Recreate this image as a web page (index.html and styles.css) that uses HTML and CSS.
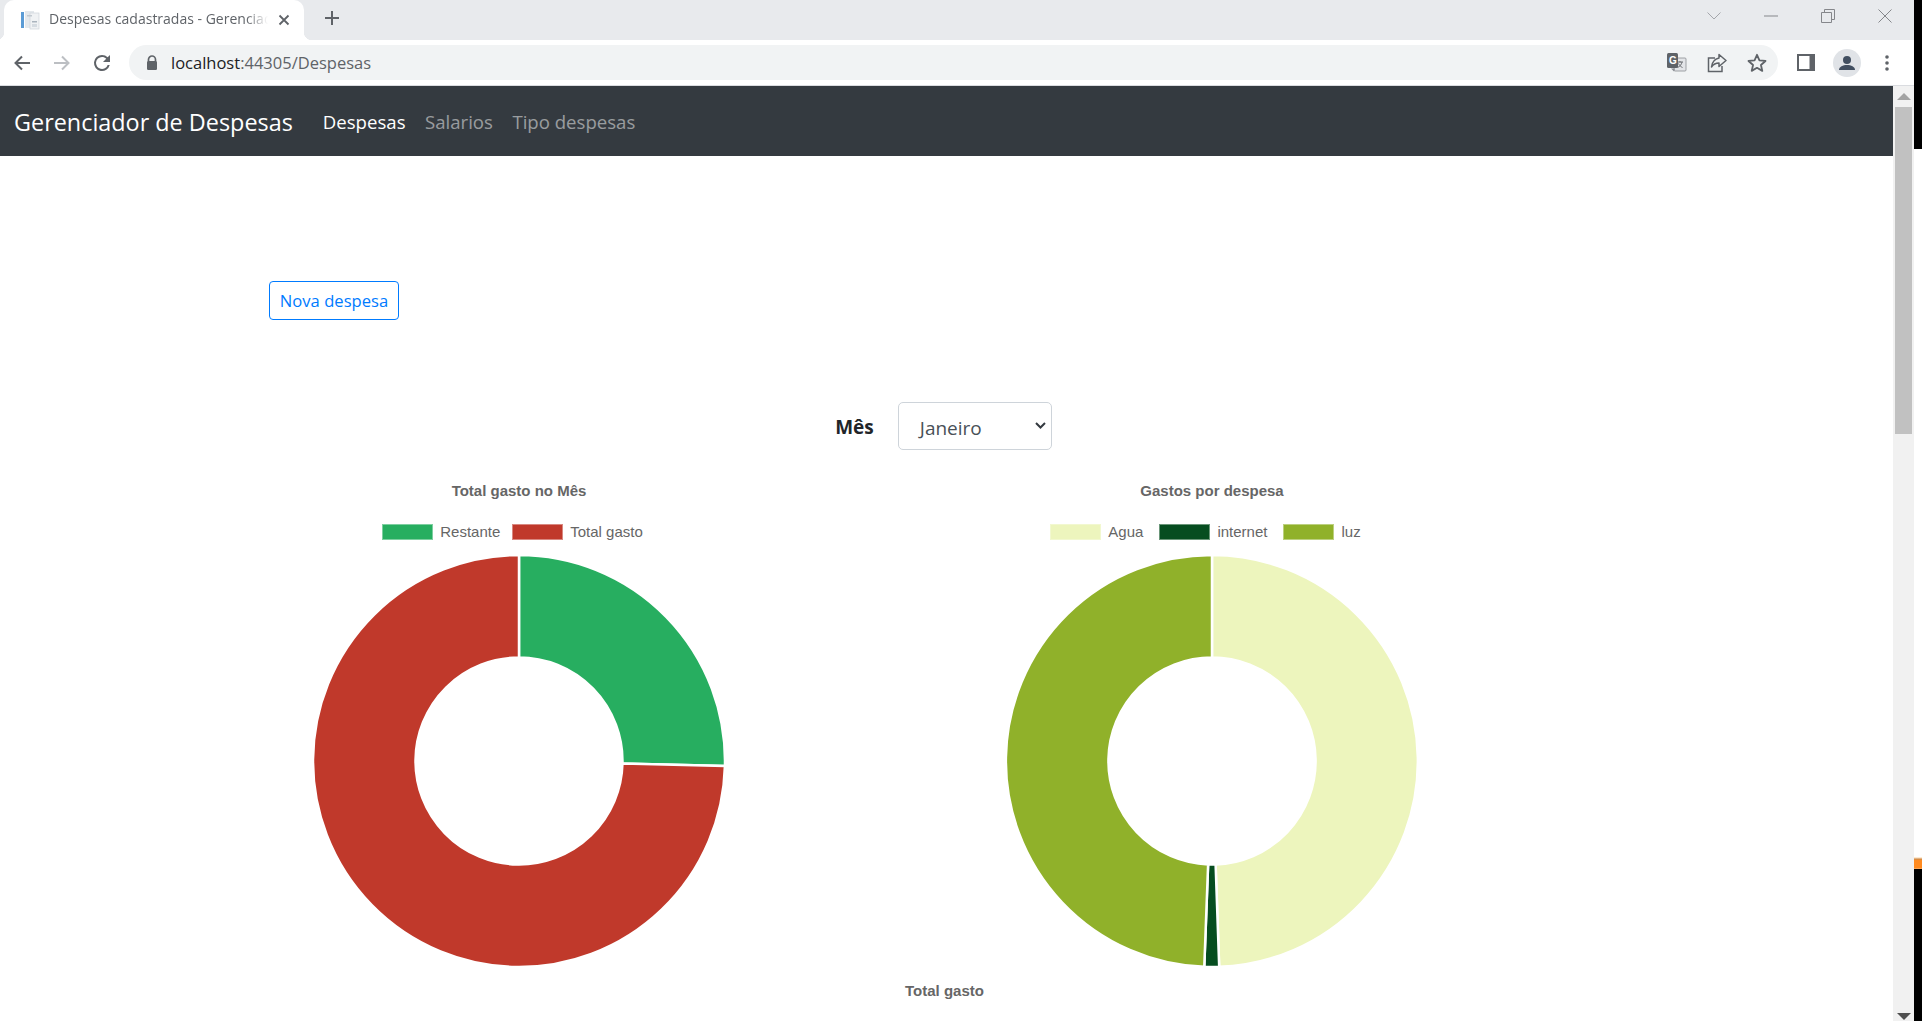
FILE: index.html
```html
<!DOCTYPE html>
<html lang="pt-BR">
<head>
<meta charset="utf-8">
<title>Despesas cadastradas - Gerenciador de Despesas</title>
<link rel="stylesheet" href="styles.css">
</head>
<body>
<div class="screen">
  <div class="window">
    <div class="tabstrip">
      <div class="tab">
        <svg class="favicon" width="20" height="20" viewBox="0 0 20 20"><rect x="1" y="2" width="3" height="16" fill="#5b9bd5"/><rect x="5" y="1" width="9" height="17" fill="#e4e8ec"/><rect x="10" y="3" width="9" height="16" fill="#f0f2f4" stroke="#cfd4da" stroke-width=".7"/><rect x="12" y="11" width="5" height="1.5" fill="#aab4be"/><rect x="12" y="14" width="5" height="3" fill="#d5dbe1"/><rect x="7" y="5" width="5" height="1.5" fill="#c2c9d0"/></svg>
        <span class="tab-title">Despesas cadastradas - Gerenciador de Despesas</span>
        <svg class="tab-close" width="12" height="12" viewBox="0 0 12 12"><path d="M1.5 1.5l9 9M10.500 1.500l-9 9" stroke="#5f6368" stroke-width="1.800" fill="none"/></svg>
      </div>
      <svg class="new-tab" width="16" height="16" viewBox="0 0 16 16"><path d="M8 1v14M1 8h14" stroke="#5f6368" stroke-width="2" fill="none"/></svg>
      <div class="win-controls">
        <span class="win-btn"><svg width="14" height="8" viewBox="0 0 14 8"><path d="M.5.5L7 7l6.500-6.500" stroke="#a4a6ab" fill="none"/></svg></span>
        <span class="win-btn"><svg width="14" height="2" viewBox="0 0 14 2"><path d="M0 1h14" stroke="#85878b" fill="none"/></svg></span>
        <span class="win-btn"><svg width="14" height="14" viewBox="0 0 14 14"><path d="M.5 3.500h10v10H.5zM3.500 3.500V.5h10v10h-3" stroke="#85878b" fill="none"/></svg></span>
        <span class="win-btn"><svg width="14" height="14" viewBox="0 0 14 14"><path d="M.5.5l13 13M13.500.5l-13 13" stroke="#85878b" fill="none"/></svg></span>
      </div>
    </div>

    <div class="toolbar">
      <span class="tool-btn"><svg width="18" height="18" viewBox="0 0 18 18"><path d="M17 9H3M9 2.500L2.500 9 9 15.500" stroke="#5f6368" stroke-width="2" fill="none"/></svg></span>
      <span class="tool-btn"><svg width="18" height="18" viewBox="0 0 18 18"><path d="M1 9h14M9 2.500L15.500 9 9 15.500" stroke="#bcbfc3" stroke-width="2" fill="none"/></svg></span>
      <span class="tool-btn"><svg width="24" height="24" viewBox="0 0 24 24"><path d="M17.650 6.350A7.960 7.960 0 0 0 12 4a8 8 0 1 0 7.730 10h-2.080A6 6 0 1 1 12 6c1.660 0 3.140.69 4.220 1.780L13 11h7V4z" fill="#5f6368"/></svg></span>
      <div class="omnibox">
        <svg class="lock" width="14" height="16" viewBox="0 0 14 16"><path d="M3.500 6V4.500a3.500 3.500 0 0 1 7 0V6" stroke="#5f6368" stroke-width="1.700" fill="none"/><rect x="2" y="6" width="10" height="9" rx="1.200" fill="#5f6368"/></svg>
        <span class="url"><span class="url-host">localhost</span>:44305/Despesas</span>
        <span class="omni-btn"><svg width="20" height="20" viewBox="0 0 20 20"><rect x="7" y="5" width="12" height="13" rx="1" fill="#e3e5e8" stroke="#8b8e93" stroke-width=".8"/><path d="M10 9h6M13 8v1.500M15 9c-.5 2.500-2 4.500-4.500 5.500M11.500 10.500c.8 1.700 2.200 3.200 4 4" stroke="#6b6e73" stroke-width="1" fill="none"/><rect x="0" y="0" width="11" height="15" rx="1.500" fill="#5f6368"/><path d="M4 15.500h4l-1 3z" fill="#8b8e93"/><text x="2" y="11" class="translate-g">G</text></svg></span>
        <span class="omni-btn"><svg width="20" height="20" viewBox="0 0 20 20"><path d="M8 5H1.500v13.500h13.500V13" stroke="#5f6368" stroke-width="1.500" fill="none"/><path d="M12 1.500L19 7.500l-7 6v-3.500c-3.500 0-5.500 1-7.500 4 .5-4.500 3-8 7.500-9z" stroke="#5f6368" stroke-width="1.500" fill="#f1f3f4" stroke-linejoin="round"/></svg></span>
        <span class="omni-btn"><svg width="20" height="20" viewBox="0 0 20 20"><path d="M10 1.800l2.450 5.550 6.050.6-4.550 4 1.350 5.950L10 14.800l-5.300 3.100 1.350-5.950-4.550-4 6.050-.6z" stroke="#5f6368" stroke-width="1.800" fill="none" stroke-linejoin="round"/></svg></span>
      </div>
      <span class="tool-right tool-panel"><svg width="18" height="17" viewBox="0 0 18 17"><rect width="18" height="17" fill="#5f6368"/><rect x="2" y="2" width="10.500" height="13" fill="#fff"/></svg></span>
      <span class="tool-right tool-avatar"><svg width="28" height="28" viewBox="0 0 28 28"><circle cx="14" cy="14" r="14" fill="#e0e3e7"/><circle cx="14" cy="11" r="4" fill="#414e60"/><path d="M6 21c0-3.500 4-5 8-5s8 1.500 8 5z" fill="#414e60"/></svg></span>
      <span class="tool-right tool-menu"><svg width="4" height="16" viewBox="0 0 4 16"><circle cx="2" cy="2" r="1.800" fill="#5f6368"/><circle cx="2" cy="8" r="1.800" fill="#5f6368"/><circle cx="2" cy="14" r="1.800" fill="#5f6368"/></svg></span>
    </div>

    <div class="viewport">
      <div class="page">
        <nav class="navbar">
          <a class="brand">Gerenciador de Despesas</a>
          <a class="nav-link active">Despesas</a>
          <a class="nav-link">Salarios</a>
          <a class="nav-link">Tipo despesas</a>
        </nav>
        <div class="actions"><a class="btn-outline">Nova despesa</a></div>
        <div class="month-filter">
          <label class="month-label">Mês</label>
          <div class="month-select"><span class="month-value">Janeiro</span><svg width="11" height="7" viewBox="0 0 11 7"><path d="M1 1l4.500 4.500L10 1" stroke="#343a40" stroke-width="2" fill="none"/></svg></div>
        </div>
        <div class="charts">
          <section class="chart">
            <h2 class="chart-title">Total gasto no Mês</h2>
            <ul class="legend">
              <li class="legend-item"><i class="swatch swatch-green"></i>Restante</li>
              <li class="legend-item"><i class="swatch swatch-red"></i>Total gasto</li>
            </ul>
            <svg class="donut" width="420" height="420" viewBox="0 0 420 420">
              <path class="slice" fill="#27ae60" d="M210 4A206 206 0 0 1 415.940 215.030L313.470 212.530A103.500 103.500 0 0 0 210 106.500Z"/>
              <path class="slice" fill="#c0392b" d="M415.940 215.030A206 206 0 1 1 210 4L210 106.500A103.500 103.500 0 1 0 313.470 212.530Z"/>
            </svg>
          </section>
          <section class="chart">
            <h2 class="chart-title">Gastos por despesa</h2>
            <ul class="legend">
              <li class="legend-item legend-item-spaced"><i class="swatch swatch-agua"></i>Agua</li>
              <li class="legend-item legend-item-spaced"><i class="swatch swatch-internet"></i>internet</li>
              <li class="legend-item"><i class="swatch swatch-luz"></i>luz</li>
            </ul>
            <svg class="donut" width="420" height="420" viewBox="0 0 420 420">
              <path class="slice" fill="#edf5bd" d="M210 4A206 206 0 0 1 217.190 415.870L213.610 313.440A103.500 103.500 0 0 0 210 106.500Z"/>
              <path class="slice" fill="#064d20" d="M217.190 415.870A206 206 0 0 1 202.270 415.860L206.120 313.430A103.500 103.500 0 0 0 213.610 313.440Z"/>
              <path class="slice" fill="#90b12a" d="M202.270 415.860A206 206 0 0 1 210 4L210 106.500A103.500 103.500 0 0 0 206.120 313.430Z"/>
            </svg>
          </section>
        </div>
        <h2 class="chart-title chart-title-total">Total gasto</h2>
      </div>
      <div class="scrollbar">
        <span class="scroll-btn"><svg width="14" height="7" viewBox="0 0 14 7"><path d="M7 0l7 7H0z" fill="#a3a3a3"/></svg></span>
        <div class="scroll-thumb"></div>
        <span class="scroll-btn scroll-btn-end"><svg width="14" height="7" viewBox="0 0 14 7"><path d="M0 0h14L7 7z" fill="#505050"/></svg></span>
      </div>
    </div>
  </div>
  <div class="desk-edge">
    <div class="edge-top"></div>
    <div class="edge-mid"></div>
    <div class="edge-orange"></div>
    <div class="edge-bottom"></div>
  </div>
</div>
</body>
</html>
```

FILE: styles.css
```css
* { box-sizing: border-box; }
html, body { margin: 0; height: 100%; overflow: hidden; background: #fff; }
body { font-family: "Open Sans", "Noto Sans", sans-serif; }

.screen { display: flex; width: 1922px; height: 1021px; }
.window { width: 1914px; display: flex; flex-direction: column; }

/* desktop edge */
.desk-edge { width: 8px; display: flex; flex-direction: column; }
.edge-top { height: 149px; background: #000; }
.edge-mid { height: 708px; background: #fff; }
.edge-orange { height: 12px; background: linear-gradient(#ffe9cf 0, #ffe9cf 8%, #c98a4d 16%, #ff8a1f 30%, #ff8a1f 90%, #ffb877 100%); }
.edge-bottom { flex: 1; background: #000; }

/* tab strip */
.tabstrip { height: 40px; background: #e8eaed; display: flex; align-items: flex-start; flex: none; }
.tab { position: relative; margin-left: 4px; width: 300px; height: 40px; background: #fff; border-radius: 10px 10px 0 0; display: flex; align-items: center; padding-left: 16px; }
.tab::before, .tab::after { content: ""; position: absolute; bottom: 0; width: 8px; height: 8px; }
.tab::before { left: -8px; background: radial-gradient(circle at 0 0, transparent 8px, #fff 8.5px); }
.tab::after { right: -8px; background: radial-gradient(circle at 100% 0, transparent 8px, #fff 8.5px); }
.favicon { flex: none; margin-top: -1px; }
.tab-title { width: 219px; margin-left: 9px; font-size: 14px; line-height: 20px; padding-bottom: 2px; color: #5f6368; white-space: nowrap; overflow: hidden; -webkit-mask-image: linear-gradient(90deg, #000 90%, transparent); mask-image: linear-gradient(90deg, #000 90%, transparent); }
.tab-close { flex: none; margin-left: 10px; }
.new-tab { margin: 10px 0 0 20px; flex: none; }
.win-controls { margin-left: auto; display: flex; }
.win-btn { width: 57px; height: 32px; display: flex; align-items: center; justify-content: center; }
.win-btn:last-child { width: 58px; }

/* toolbar */
.toolbar { height: 46px; flex: none; background: #fff; border-bottom: 1px solid #dadce0; display: flex; align-items: flex-start; padding-left: 2px; }
.tool-btn { width: 40px; height: 35px; margin-top: 5px; display: flex; align-items: center; justify-content: center; flex: none; }
.omnibox { width: 1649px; height: 35px; margin: 5px 0 0 7px; background: #f1f3f4; border-radius: 18px; display: flex; align-items: center; padding: 0 1px 0 16px; flex: none; }
.lock { flex: none; }
.url { margin: 0 auto 0 12px; font-size: 16.5px; color: #5f6368; white-space: nowrap; }
.url-host { color: #202124; }
.omni-btn { width: 40px; height: 35px; display: flex; align-items: center; justify-content: center; flex: none; }
.translate-g { font-family: "Liberation Sans", sans-serif; font-size: 10px; font-weight: 700; fill: #fff; }
.tool-right { height: 35px; margin-top: 5px; display: flex; align-items: center; justify-content: center; flex: none; }
.tool-panel { width: 18px; margin-left: 19px; }
.tool-avatar { width: 28px; margin-left: 18px; }
.tool-menu { width: 4px; margin-left: 24px; }

/* viewport */
.viewport { flex: 1; display: flex; min-height: 0; }
.page { flex: 1; min-width: 0; background: #fff; overflow: hidden; }
.scrollbar { width: 21px; flex: none; background: #f1f1f1; display: flex; flex-direction: column; }
.scroll-btn { height: 21px; display: flex; align-items: center; justify-content: center; flex: none; }
.scroll-btn-end { margin-top: auto; padding-top: 11px; }
.scroll-thumb { height: 327px; margin: 0 2px; background: #c1c1c1; }

/* navbar */
.navbar { height: 70px; background: #343a40; display: flex; align-items: center; padding: 1px 0 0 14px; }
.brand { font-size: 23.4px; color: #fff; margin-right: 30px; white-space: nowrap; }
.nav-link { font-size: 18.6px; color: rgba(255, 255, 255, .5); margin-right: 19.5px; white-space: nowrap; }
.nav-link.active { color: #fff; }

/* content */
.actions { padding: 125px 0 0 269px; display: flex; }
.btn-outline { width: 130px; height: 39px; border: 1px solid #007bff; border-radius: 4px; color: #007bff; font-size: 16.600px; display: flex; align-items: center; justify-content: center; white-space: nowrap; }
.month-filter { margin-top: 82px; display: flex; justify-content: center; align-items: center; gap: 24px; padding-right: 6px; height: 48px; }
.month-label { font-size: 19px; font-weight: 700; color: #212529; padding-top: 1px; }
.month-select { width: 154px; height: 48px; border: 1px solid #ced4da; border-radius: 5px; display: flex; align-items: center; justify-content: space-between; padding: 0 5px 0 21px; font-size: 19px; color: #495057; }
.month-value { padding-top: 4px; }
.month-select svg { margin-top: -2px; }

.charts { display: grid; grid-template-columns: 694px 692px; padding-left: 172px; margin-top: 31px; }
.chart { display: flex; flex-direction: column; align-items: center; }
.chart-title { margin: 0; font: 700 15px/20px "Liberation Sans", Arial, sans-serif; color: #666; height: 20px; }
.legend { list-style: none; margin: 23px 0 0; padding: 0 13px 0 0; display: flex; gap: 12px; height: 16px; font: 15px/16px "Liberation Sans", Arial, sans-serif; color: #666; }
.legend-item { display: flex; align-items: center; gap: 7px; white-space: nowrap; }
.legend-item-spaced { margin-right: 4px; }
.swatch { width: 51px; height: 16px; display: block; flex: none; border: 1px solid; }
.swatch-green { background: #27ae60; border-color: #7dcfa0; }
.swatch-red { background: #c0392b; border-color: #d98880; }
.swatch-agua { background: #edf5bd; border-color: #f2f8d0; }
.swatch-internet { background: #064d20; border-color: #6a9679; }
.swatch-luz { background: #90b12a; border-color: #bcd07f; }
.donut { display: block; margin-top: 11px; flex: none; }
.slice { stroke: #fff; stroke-width: 2.500; }
.chart-title-total { text-align: center; width: 1889px; margin-top: 10px; }
```
